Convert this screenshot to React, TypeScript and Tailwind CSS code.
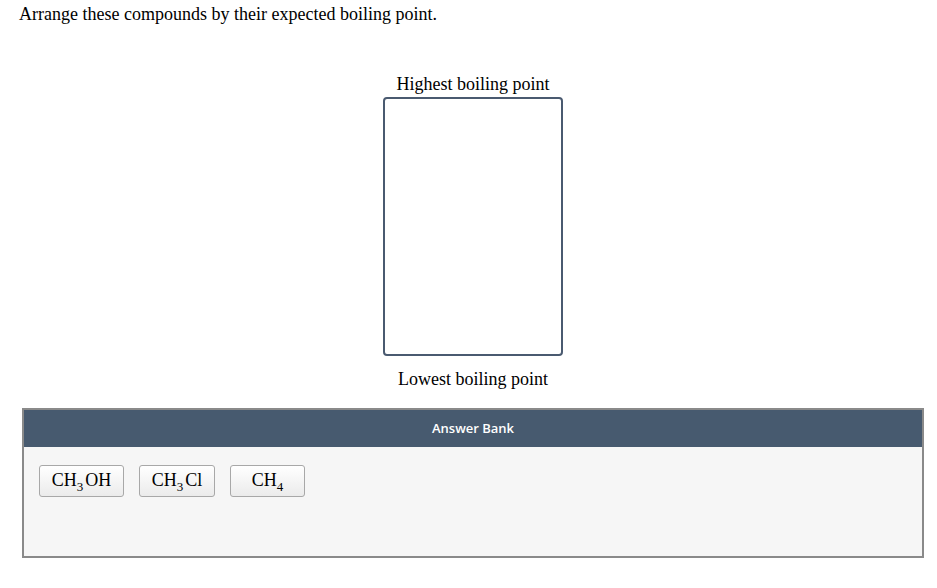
import React from "react";

type Compound = { id: string; base: string; sub: string; rest: string; width: string };

const compounds: Compound[] = [
  { id: "ch3oh", base: "CH", sub: "3", rest: "OH", width: "w-[85px]" },
  { id: "ch3cl", base: "CH", sub: "3", rest: "Cl", width: "w-[76px]" },
  { id: "ch4", base: "CH", sub: "4", rest: "", width: "w-[75px]" },
];

function Formula({ c }: { c: Compound }) {
  return (
    <span className="whitespace-nowrap">
      {c.base}
      <span className="text-[13px] leading-none align-[-5px]">{c.sub}</span>
      {c.rest && <span className="ml-[2px]">{c.rest}</span>}
    </span>
  );
}

export default function App() {
  return (
    <div
      className="w-[937px] h-[588px] bg-white text-black text-[18px]"
      style={{ fontFamily: '"Liberation Serif", "Times New Roman", serif' }}
    >
      <p className="pl-[19px] pt-[3px] leading-[22px]">
        Arrange these compounds by their expected boiling point.
      </p>

      <div className="ml-[22px] w-[902px]">
        <div className="flex flex-col items-center mt-[48px]">
          <p className="leading-[22px]">Highest boiling point</p>
          <div className="mt-[2px] w-[180px] h-[259px] border-2 border-[#4a5a70] rounded-[4px] bg-white" />
          <p className="mt-[12px] leading-[22px]">Lowest boiling point</p>
        </div>

        <div className="mt-[18px] h-[150px] border-2 border-[#8a8a8a] bg-[#f6f6f6] flex flex-col">
          <div
            className="h-[37px] bg-[#475a6f] flex items-center justify-center text-white text-[13px] font-semibold"
            style={{ fontFamily: '"Open Sans", "Liberation Sans", sans-serif' }}
          >
            Answer Bank
          </div>
          <div className="flex gap-[15px] pl-[15px] pt-[18px]">
            {compounds.map((c) => (
              <button
                key={c.id}
                className={`${c.width} h-[32px] rounded-[3px] border border-[#a8a8a8] bg-gradient-to-b from-white to-[#ebebeb] flex items-center justify-center text-[18px] leading-[22px] pb-[1px]`}
                style={{ fontFamily: '"Liberation Serif", "Times New Roman", serif' }}
              >
                <Formula c={c} />
              </button>
            ))}
          </div>
        </div>
      </div>
    </div>
  );
}
